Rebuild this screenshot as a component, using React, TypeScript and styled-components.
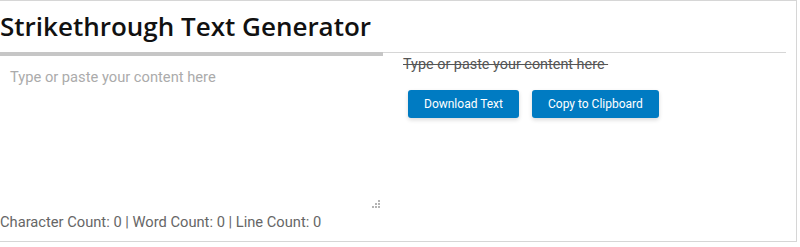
import React, { useState } from "react";
import styled, { createGlobalStyle } from "styled-components";

const Global = createGlobalStyle`
  html, body { margin: 0; padding: 0; background: #ffffff; }
  body { font-family: Roboto, "Liberation Sans", Arial, sans-serif; }
  * { box-sizing: border-box; }
`;

const Frame = styled.div`
  width: 797px;
  height: 242px;
  border: 1px solid #d6d6d6;
  border-left: none;
  padding-right: 9px;
  background: #fff;
`;

const Header = styled.header`
  height: 51px;
  padding-top: 10px;
`;

const Title = styled.h1`
  margin: 0;
  font-family: "Open Sans", "Liberation Sans", sans-serif;
  font-weight: 600;
  font-size: 26px;
  line-height: 31px;
  color: #111;
`;

const Columns = styled.div`
  display: grid;
  grid-template-columns: 383px 403px;
`;

const LeftCol = styled.div`
  display: flex;
  flex-direction: column;
`;

const InputWrap = styled.div`
  position: relative;
  width: 383px;
  height: 158px;
`;

const Input = styled.textarea`
  display: block;
  width: 100%;
  height: 100%;
  margin: 0;
  border: none;
  border-top: 4px solid #c6c6c6;
  padding: 11px 10px 10px;
  resize: none;
  outline: none;
  font-family: Roboto, "Liberation Sans", sans-serif;
  font-size: 14.7px;
  line-height: 21px;
  color: #444;
  background: #fff;
  &::placeholder { color: #ababab; }
`;

const Grip = styled.span`
  position: absolute;
  right: 3px;
  bottom: 2px;
  width: 8px;
  height: 8px;
  pointer-events: none;
  background:
    linear-gradient(#b4b4b4, #b4b4b4) 6px 0 / 2px 2px no-repeat,
    linear-gradient(#b4b4b4, #b4b4b4) 3px 3px / 2px 2px no-repeat,
    linear-gradient(#b4b4b4, #b4b4b4) 6px 3px / 2px 2px no-repeat,
    linear-gradient(#b4b4b4, #b4b4b4) 0 6px / 2px 2px no-repeat,
    linear-gradient(#b4b4b4, #b4b4b4) 3px 6px / 2px 2px no-repeat,
    linear-gradient(#b4b4b4, #b4b4b4) 6px 6px / 2px 2px no-repeat;
`;

const Counts = styled.div`
  padding-top: 2px;
  font-size: 14.7px;
  line-height: 21px;
  color: #666;
`;

const RightCol = styled.div`
  border-top: 1px solid #d6d6d6;
  padding: 1px 0 0 20px;
`;

const Output = styled.div`
  font-size: 14.4px;
  line-height: 21px;
  color: #555;
  text-decoration: line-through;
  white-space: pre-wrap;
  min-height: 21px;
`;

const ButtonRow = styled.div`
  display: flex;
  gap: 13px;
  margin: 15px 0 0 5px;
`;

const Button = styled.button`
  height: 28px;
  padding: 0 16px;
  border: none;
  border-radius: 3px;
  background: #007bc2;
  color: #fff;
  font-family: Roboto, "Liberation Sans", sans-serif;
  font-size: 12px;
  box-shadow: 0 2px 4px rgba(0, 0, 0, 0.15);
  cursor: pointer;
`;

export default function App() {
  const [text, setText] = useState("");
  const chars = text.length;
  const words = text.trim() ? text.trim().split(/\s+/).length : 0;
  const lines = text ? text.split("\n").length : 0;
  return (
    <>
      <Global />
      <Frame>
        <Header>
          <Title>Strikethrough Text Generator</Title>
        </Header>
        <Columns>
          <LeftCol>
            <InputWrap>
              <Input
                placeholder="Type or paste your content here"
                value={text}
                onChange={(e) => setText(e.target.value)}
              />
              <Grip />
            </InputWrap>
            <Counts>
              Character Count: {chars} | Word Count: {words} | Line Count: {lines}
            </Counts>
          </LeftCol>
          <RightCol>
            <Output>{text ? text : "Type or paste your content here "}</Output>
            <ButtonRow>
              <Button>Download Text</Button>
              <Button>Copy to Clipboard</Button>
            </ButtonRow>
          </RightCol>
        </Columns>
      </Frame>
    </>
  );
}
